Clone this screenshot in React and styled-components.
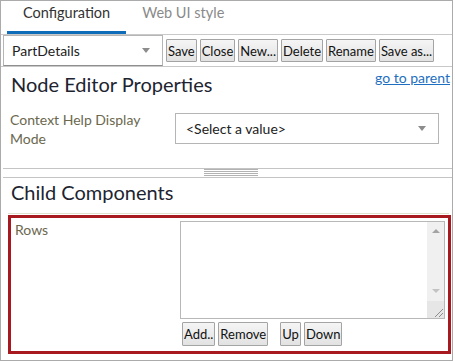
import React from "react";
import styled, { createGlobalStyle } from "styled-components";

const GlobalStyle = createGlobalStyle`
  html, body {
    margin: 0;
    padding: 0;
    background: #ffffff;
  }
  body {
    font-family: Lato, "Open Sans", sans-serif;
    color: #222;
  }
  * {
    box-sizing: border-box;
  }
`;

const Frame = styled.div`
  width: 453px;
  height: 361px;
  border: 1px solid #ababab;
  display: flex;
  flex-direction: column;
  background: #fff;
`;

const TabBar = styled.div`
  display: flex;
  height: 34px;
  padding-left: 6px;
  border-bottom: 1px solid #c9c9c9;
`;

const Tab = styled.div`
  height: 33px;
  padding: 3px 16px 0;
  font-size: 14.5px;
  line-height: 18px;
  color: ${(p) => (p.active ? "#333" : "#8a8a8a")};
  border-bottom: 3px solid ${(p) => (p.active ? "#0f6cb8" : "transparent")};
`;

const Toolbar = styled.div`
  display: flex;
  align-items: center;
  gap: 3px;
  height: 32px;
  padding-left: 2px;
  border-bottom: 1px solid #c9c9c9;
`;

const SelectBox = styled.div`
  display: flex;
  flex-shrink: 0;
  align-items: center;
  justify-content: space-between;
  width: ${(p) => p.width}px;
  height: 31px;
  padding: 0 ${(p) => p.caretGap}px 0 ${(p) => p.indent}px;
  border: 1px solid #b5b5b5;
  border-bottom-color: ${(p) => p.bottom || "#b5b5b5"};
  font-size: 14px;
  color: #222;
  background: #fff;
`;

const Caret = styled.span`
  width: 0;
  height: 0;
  border-left: 4px solid transparent;
  border-right: 4px solid transparent;
  border-top: 5px solid #8c8c8c;
`;

const Button = styled.button`
  flex-shrink: 0;
  white-space: nowrap;
  height: ${(p) => p.h || 23}px;
  padding: 0 1px;
  margin: 0;
  font-family: Lato, "Open Sans", sans-serif;
  font-size: 13px;
  color: #111;
  border: 1px solid #a4a4a4;
  border-radius: 1px;
  background: linear-gradient(#f5f5f5, #e2e2e2);
  cursor: default;
`;

const Section = styled.div`
  height: 101px;
  padding: 2px 2px 0 9px;
`;

const HeaderRow = styled.div`
  display: flex;
  justify-content: space-between;
  align-items: flex-start;
`;

const Title = styled.h2`
  margin: 3px 0 0 1px;
  font-size: 20px;
  line-height: 24px;
  font-weight: 400;
  color: #1d2430;
`;

const ParentLink = styled.a`
  font-size: 14px;
  line-height: 18px;
  color: #1e6fc0;
  text-decoration: underline;
`;

const FormRow = styled.div`
  display: grid;
  grid-template-columns: 165px 263px;
  margin-top: 14px;
`;

const Label = styled.div`
  font-size: 14px;
  line-height: 19px;
  color: #6b684e;
  width: 150px;
`;

const SelectCell = styled.div`
  padding-top: 3px;
`;

const Splitter = styled.div`
  height: 10px;
  margin-left: 2px;
  border-top: 1px solid #c4c4c4;
  border-bottom: 1px solid #c4c4c4;
  display: flex;
  justify-content: center;
  padding: 0 0 0 6px;
`;

const Grip = styled.div`
  width: 54px;
  height: 7px;
  background: repeating-linear-gradient(
    to bottom,
    #b2b2b2 0 1px,
    transparent 1px 2px
  );
`;

const ChildSection = styled.div`
  padding: 2px 1px 0 7px;
`;

const ChildTitle = styled(Title)`
  margin: 0 0 9px 3px;
`;

const Rule = styled.div`
  height: 1px;
  background: #dfe1cf;
  margin-bottom: 1px;
  margin-right: 2px;
`;

const Highlight = styled.div`
  height: 139px;
  border: 3px solid #a7181f;
  padding: 3px 2px 5px 4px;
  display: flex;
`;

const FieldLabel = styled.div`
  width: 165px;
  font-size: 14px;
  line-height: 18px;
  color: #6b684e;
`;

const FieldColumn = styled.div`
  display: flex;
  flex-direction: column;
`;

const ListBox = styled.div`
  width: 265px;
  height: 98px;
  border: 1px solid #b8b8b8;
  display: flex;
  justify-content: flex-end;
`;

const ScrollTrack = styled.div`
  width: 17px;
  height: 100%;
  background: #f0f0f0;
  display: flex;
  flex-direction: column;
  align-items: center;
`;

const ArrowUp = styled.span`
  margin-top: 7px;
  width: 0;
  height: 0;
  border-left: 4px solid transparent;
  border-right: 4px solid transparent;
  border-bottom: 4px solid #a3a3a3;
`;

const ArrowDown = styled.span`
  margin-top: auto;
  margin-bottom: 8px;
  width: 0;
  height: 0;
  border-left: 4px solid transparent;
  border-right: 4px solid transparent;
  border-top: 4px solid #c3c3c3;
`;

const Resizer = styled.div`
  width: 17px;
  height: 17px;
  background: #e6e6e6;
  display: flex;
  align-items: flex-end;
  justify-content: flex-end;
`;

const ButtonRow = styled.div`
  display: flex;
  gap: 3px;
  margin: 3px 0 0 2px;
`;

const Spacer = styled.span`
  width: 6px;
`;

export default function App() {
  return (
    <>
      <GlobalStyle />
      <Frame>
        <TabBar>
          <Tab active>Configuration</Tab>
          <Tab>Web UI style</Tab>
        </TabBar>
        <Toolbar>
          <SelectBox width={160} indent={8} caretGap={12} bottom="#8f8f8f">
            PartDetails
            <Caret />
          </SelectBox>
          <Button>Save</Button>
          <Button>Close</Button>
          <Button>New...</Button>
          <Button>Delete</Button>
          <Button>Rename</Button>
          <Button>Save as...</Button>
        </Toolbar>
        <Section>
          <HeaderRow>
            <Title>Node Editor Properties</Title>
            <ParentLink href="#">go to parent</ParentLink>
          </HeaderRow>
          <FormRow>
            <Label>Context Help Display Mode</Label>
            <SelectCell>
              <SelectBox width={264} indent={10} caretGap={12}>
                &lt;Select a value&gt;
                <Caret />
              </SelectBox>
            </SelectCell>
          </FormRow>
        </Section>
        <Splitter>
          <Grip />
        </Splitter>
        <ChildSection>
          <ChildTitle>Child Components</ChildTitle>
          <Rule />
          <Highlight>
            <FieldLabel>Rows</FieldLabel>
            <FieldColumn>
              <ListBox>
                <ScrollTrack>
                  <ArrowUp />
                  <ArrowDown />
                  <Resizer>
                    <svg width="12" height="12" viewBox="0 0 12 12">
                      <path
                        d="M11 3 L3 11 M11 7 L7 11"
                        stroke="#8c8c8c"
                        strokeWidth="1"
                        fill="none"
                      />
                    </svg>
                  </Resizer>
                </ScrollTrack>
              </ListBox>
              <ButtonRow>
                <Button h={24}>Add..</Button>
                <Button h={24}>Remove</Button>
                <Spacer />
                <Button h={24}>Up</Button>
                <Button h={24}>Down</Button>
              </ButtonRow>
            </FieldColumn>
          </Highlight>
        </ChildSection>
      </Frame>
    </>
  );
}
